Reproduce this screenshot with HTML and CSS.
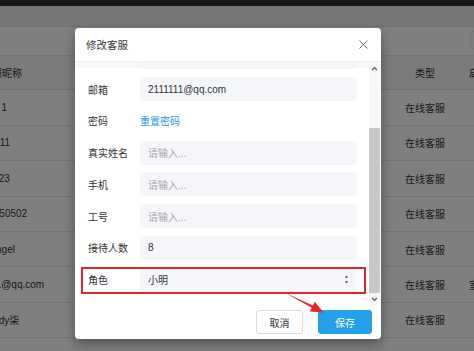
FILE: index.html
```html
<!DOCTYPE html>
<html lang="zh-CN">
<head>
<meta charset="utf-8">
<title>修改客服</title>
<link rel="stylesheet" href="styles.css">
</head>
<body>
<div class="page">
  <div class="topbar"></div>
  <div class="subbar"><span class="search-btn"></span></div>
  <div class="table">
    <div class="tr th"><div class="c1">在线客服昵称</div><div class="c2">类型</div><div class="c3">启用</div></div>
    <div class="tr"><div class="c1">kefu00&nbsp;&nbsp;1</div><div class="c2">在线客服</div><div class="c3"></div></div>
    <div class="tr"><div class="c1">111111111</div><div class="c2">在线客服</div><div class="c3"></div></div>
    <div class="tr"><div class="c1">test00123</div><div class="c2">在线客服</div><div class="c3"></div></div>
    <div class="tr"><div class="c1">a1380050502</div><div class="c2">在线客服</div><div class="c3"></div></div>
    <div class="tr"><div class="c1">kefu_angel</div><div class="c2">在线客服</div><div class="c3"></div></div>
    <div class="tr"><div class="c1">2111111@qq.com</div><div class="c2">在线客服</div><div class="c3">室</div></div>
    <div class="tr"><div class="c1">zhaoandy柒</div><div class="c2">在线客服</div><div class="c3"></div></div>
  </div>
</div>
<div class="mask"></div>

<div class="modal">
  <div class="mhead">
    <span class="mtitle">修改客服</span>
    <svg class="close" width="9" height="9" viewBox="0 0 9 9"><path d="M0.5 0.5L8.5 8.5M8.5 0.5L0.5 8.5" stroke="#7a7a7a" stroke-width="1" fill="none"/></svg>
  </div>
  <div class="mbody">
    <div class="scroll">
      <div class="form">
        <div class="row"><span class="label"></span><span class="input"></span></div>
        <div class="row"><span class="label">邮箱</span><span class="input">2111111@qq.com</span></div>
        <div class="row"><span class="label">密码</span><a class="link">重置密码</a></div>
        <div class="row"><span class="label">真实姓名</span><span class="input ph">请输入...</span></div>
        <div class="row"><span class="label">手机</span><span class="input ph">请输入...</span></div>
        <div class="row"><span class="label">工号</span><span class="input ph">请输入...</span></div>
        <div class="row"><span class="label">接待人数</span><span class="input">8</span></div>
        <div class="row marked"><span class="label">角色</span><span class="input select"><span>小明</span>
          <svg class="updown" width="5" height="9" viewBox="0 0 5 9"><path d="M2.5 0.5L4.2 2.8H0.8Z M2.5 8.5L4.2 6.2H0.8Z" fill="#555"/></svg></span></div>
      </div>
    </div>
    <div class="sbar">
      <div class="sb-btn"><svg width="7" height="5" viewBox="0 0 7 5"><path d="M1 4L3.5 1.5L6 4" stroke="#555" stroke-width="1.1" fill="none"/></svg></div>
      <div class="sb-track"><div class="sb-space"></div><div class="sb-thumb"></div></div>
      <div class="sb-btn"><svg width="7" height="5" viewBox="0 0 7 5"><path d="M1 1L3.5 3.5L6 1" stroke="#555" stroke-width="1.1" fill="none"/></svg></div>
    </div>
  </div>
  <div class="mfoot">
    <button class="btn cancel">取消</button>
    <button class="btn save">保存</button>
  </div>
</div>

<svg class="arrow" width="474" height="351" viewBox="0 0 474 351">
  <polygon points="284.5,292.5 311.8,307.7 309.8,311.5 323.5,312.5 314.8,301.8 312.8,305.5" fill="#e8262a"/>
</svg>
</body>
</html>
```

FILE: styles.css
```css
html, body {
  margin: 0;
  padding: 0;
}
body {
  width: 474px;
  height: 351px;
  overflow: hidden;
  position: relative;
  font-family: "Liberation Sans", "Noto Sans CJK SC", sans-serif;
  font-size: 10px;
  color: #333;
  background: #fff;
}
.page {
  width: 474px;
  height: 351px;
  overflow: hidden;
  display: flex;
  flex-direction: column;
  background: #fff;
}
.topbar {
  height: 6px;
  background: #2b2f37;
  flex: none;
}
.subbar {
  height: 20px;
  background: #eeeeee;
  border-bottom: 1px solid #e2e2e2;
  flex: none;
  position: relative;
}
.search-btn {
  position: absolute;
  right: 0;
  top: 25px;
  width: 3px;
  height: 16px;
  border: 1px solid #e6e6e6;
  border-right: none;
  border-radius: 4px 0 0 4px;
  background: #fafafa;
}
.table {
  margin-top: 28px;
  display: flex;
  flex-direction: column;
}
.tr {
  display: flex;
  height: 35.4px;
  align-items: center;
  border-bottom: 1px solid #e6e6e6;
  box-sizing: border-box;
  color: #333;
}
.th {
  background: #f6f6f6;
  border-top: 1px solid #e6e6e6;
}
.c1 {
  margin-left: -34px;
  width: 419px;
  flex: none;
  white-space: nowrap;
}
.th .c1 {
  margin-left: -38px;
  width: 423px;
}
.c2 {
  width: 80px;
  flex: none;
  text-align: center;
}
.c3 {
  flex: none;
  padding-left: 4px;
  white-space: nowrap;
}
.mask {
  position: absolute;
  inset: 0;
  background: rgba(0, 0, 0, 0.5);
}
.modal {
  position: absolute;
  left: 75px;
  top: 28px;
  width: 306px;
  height: 311px;
  background: #fff;
  border-radius: 4px;
  box-shadow: 0 5px 12px rgba(0, 0, 0, 0.35);
  display: flex;
  flex-direction: column;
  overflow: hidden;
}
.mhead {
  height: 34px;
  flex: none;
  box-sizing: border-box;
  display: flex;
  align-items: center;
  justify-content: space-between;
  padding: 0 13px 0 11px;
  border-bottom: 1px solid #f0f0f0;
}
.mtitle {
  font-size: 10.5px;
  color: #333;
}
.close {
  display: block;
  margin-top: -1px;
}
.mbody {
  height: 243px;
  flex: none;
  display: flex;
}
.scroll {
  flex: 1;
  overflow: hidden;
  padding: 0 12px 0 13px;
  background: linear-gradient(#f6f7f9, #f6f7f9) top left / 100% 6px no-repeat;
}
.form {
  margin-top: -16.8px;
}
.row {
  display: flex;
  align-items: center;
  height: 24px;
  margin-bottom: 7.8px;
  position: relative;
}
.label {
  width: 52px;
  flex: none;
  color: #333;
}
.input {
  flex: 1;
  height: 24px;
  box-sizing: border-box;
  background: #f5f6fa;
  border-radius: 3px;
  padding-left: 8px;
  display: flex;
  align-items: center;
  color: #333;
}
.ph {
  color: #a8a8a8;
}
.link {
  color: #2a95e8;
}
.select {
  justify-content: space-between;
  padding-right: 8px;
}
.updown {
  display: block;
}
.marked::after {
  content: "";
  position: absolute;
  left: -7px;
  right: -9px;
  top: -1px;
  bottom: -2px;
  border: 2px solid #e0262b;
}
.sbar {
  width: 11px;
  margin-right: 1px;
  flex: none;
  display: flex;
  flex-direction: column;
  background: #f7f7f7;
}
.sb-btn {
  height: 12px;
  flex: none;
  display: flex;
  align-items: center;
  justify-content: center;
}
.sb-track {
  flex: 1;
  display: flex;
  flex-direction: column;
}
.sb-space {
  height: 54px;
  flex: none;
}
.sb-thumb {
  flex: 1;
  background: #c8c8c8;
}
.mfoot {
  height: 34px;
  flex: none;
  display: flex;
  align-items: center;
  justify-content: flex-end;
  gap: 15px;
  padding-right: 9px;
}
.btn {
  height: 24px;
  border-radius: 3px;
  font-family: "Liberation Sans", "Noto Sans CJK SC", sans-serif;
  font-size: 10px;
  padding: 0;
  cursor: pointer;
}
.cancel {
  width: 47px;
  background: #fff;
  border: 1px solid #dcdcdc;
  color: #333;
}
.save {
  width: 54px;
  background: #22a0ea;
  border: 1px solid #22a0ea;
  color: #fff;
}
.arrow {
  position: absolute;
  left: 0;
  top: 0;
}
```
